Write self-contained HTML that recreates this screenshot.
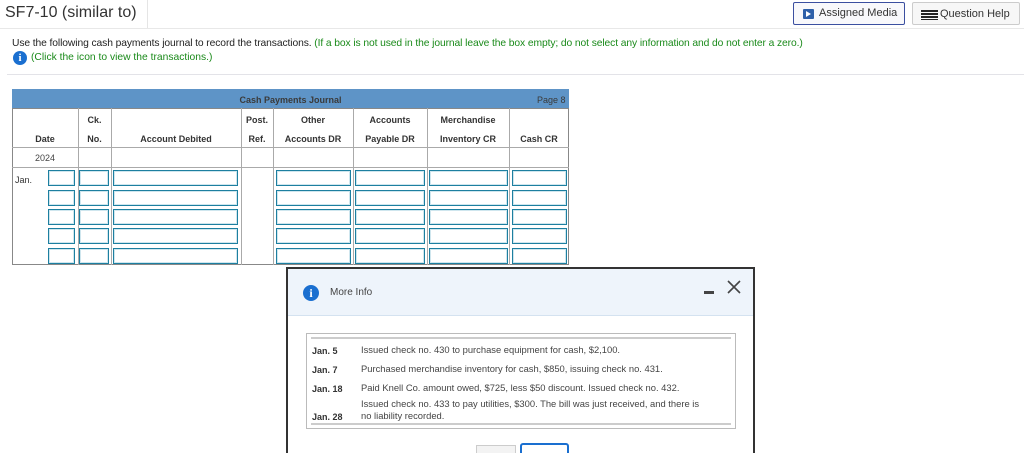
<!DOCTYPE html>
<html style="height:453px;overflow:hidden"><head><meta charset="utf-8"><style>
*{margin:0;padding:0;box-sizing:border-box}
body{width:1024px;height:453px;overflow:hidden;background:#fff;font-family:"Liberation Sans",Arial,sans-serif;color:#333;position:relative}
.a{position:absolute;white-space:nowrap}
.inp{position:absolute;border:1px solid #1d7fa0;box-shadow:inset 0 0 0 1px #cfe6ee;background:#fff}
.vl{position:absolute;width:1px;background:#aaa}
.hl{position:absolute;height:1px;background:#aaa}
.th{position:absolute;font-size:9px;font-weight:bold;color:#333;text-align:center;white-space:nowrap}
.btn{position:absolute;border:1px solid #ccc;border-radius:2px;background:#f7f7f7;font-size:11px;color:#333}
.mt{position:absolute;font-size:9.4px;color:#444;white-space:nowrap}
.mb{position:absolute;font-size:9px;font-weight:bold;color:#333;white-space:nowrap}
</style></head><body>
<div class="a" style="left:5px;top:4px;font-size:16px;color:#333">SF7-10 (similar to)</div>
<div class="vl" style="left:147px;top:0;height:28px;background:#e5e5e5"></div>
<div class="hl" style="left:0;top:28px;width:1024px;background:#e8e8e8"></div>
<div class="btn" style="left:793px;top:2px;width:112px;height:23px;border-color:#3b4fa0;background:#f8f8fb">
 <div style="position:absolute;left:9px;top:6px;width:11px;height:10px;background:#2e5fa8;border-radius:1px"><div style="position:absolute;left:3px;top:2px;border-left:5px solid #fff;border-top:3px solid transparent;border-bottom:3px solid transparent"></div></div>
 <span class="a" style="left:25px;top:4px">Assigned Media</span></div>
<div class="btn" style="left:912px;top:2px;width:108px;height:23px">
 <div style="position:absolute;left:8px;top:7px;width:17px;height:10px;background:repeating-linear-gradient(#222 0 2px,#f7f7f7 2px 3px)"></div>
 <span class="a" style="left:27px;top:5px">Question Help</span></div>
<div class="a" style="left:12px;top:38px;font-size:10.3px;letter-spacing:-0.1px;color:#222">Use the following cash payments journal to record the transactions. <span style="color:#1a8a1a">(If a box is not used in the journal leave the box empty; do not select any information and do not enter a zero.)</span></div>
<div class="a" style="left:13px;top:51px;width:14px;height:14px;border-radius:50%;background:#1a6fd0;color:#fff;font-size:11px;font-weight:bold;text-align:center;line-height:14px;font-family:'Liberation Serif',serif">i</div>
<div class="a" style="left:31px;top:52px;font-size:10.3px;color:#1a8a1a">(Click the icon to view the transactions.)</div>
<div class="hl" style="left:7px;top:74px;width:1017px;background:#e3e3e8"></div>

<div style="position:absolute;left:12px;top:89px;width:557px;height:176px;border:1px solid #888;border-top:none"></div>
<div style="position:absolute;left:12px;top:89px;width:557px;height:19px;background:#5e94c7"></div>
<div class="a" style="left:12px;top:95px;width:557px;text-align:center;font-size:9px;font-weight:bold;color:#3a3a3a">Cash Payments Journal</div>
<div class="a" style="left:537px;top:95px;font-size:9px;color:#3a3a3a">Page 8</div>
<div class="hl" style="left:12px;top:108px;width:557px;background:#888"></div>
<div class="hl" style="left:12px;top:147px;width:557px"></div>
<div class="hl" style="left:12px;top:167px;width:557px"></div>
<div class="vl" style="left:78px;top:108px;height:157px"></div>
<div class="vl" style="left:111px;top:108px;height:157px"></div>
<div class="vl" style="left:241px;top:108px;height:157px"></div>
<div class="vl" style="left:273px;top:108px;height:157px"></div>
<div class="vl" style="left:353px;top:108px;height:157px"></div>
<div class="vl" style="left:427px;top:108px;height:157px"></div>
<div class="vl" style="left:509px;top:108px;height:157px"></div>
<div class="th" style="left:12px;top:134px;width:66px">Date</div>
<div class="th" style="left:78px;top:115px;width:33px">Ck.</div>
<div class="th" style="left:78px;top:134px;width:33px">No.</div>
<div class="th" style="left:111px;top:134px;width:130px">Account Debited</div>
<div class="th" style="left:241px;top:115px;width:32px">Post.</div>
<div class="th" style="left:241px;top:134px;width:32px">Ref.</div>
<div class="th" style="left:273px;top:115px;width:80px">Other</div>
<div class="th" style="left:273px;top:134px;width:80px">Accounts DR</div>
<div class="th" style="left:353px;top:115px;width:74px">Accounts</div>
<div class="th" style="left:353px;top:134px;width:74px">Payable DR</div>
<div class="th" style="left:427px;top:115px;width:82px">Merchandise</div>
<div class="th" style="left:427px;top:134px;width:82px">Inventory CR</div>
<div class="th" style="left:509px;top:134px;width:60px">Cash CR</div>
<div class="a" style="left:12px;top:153px;width:66px;text-align:center;font-size:9px;color:#444">2024</div>
<div class="a" style="left:15px;top:175px;font-size:9px;color:#333">Jan.</div>
<div id="rows"></div>
<script>
var ys=[170,190,209,228,248],xs=[[48,27],[79,30],[113,125],[276,75],[355,70],[429,79],[512,55]],h='';
ys.forEach(function(y){xs.forEach(function(c){h+='<div class="inp" style="left:'+c[0]+'px;top:'+y+'px;width:'+c[1]+'px;height:16px"></div>'})});
document.getElementById('rows').innerHTML=h;
</script>

<div style="position:absolute;left:286px;top:267px;width:469px;height:200px;border:2px solid #333;background:#fff">
 <div style="position:absolute;left:0;top:0;width:465px;height:47px;background:#eef4fb;border-bottom:1px solid #d4e2f0"></div>
 <div class="a" style="left:15px;top:16px;width:16px;height:16px;border-radius:50%;background:#1a6fd0;color:#fff;font-size:12px;font-weight:bold;text-align:center;line-height:16px;font-family:'Liberation Serif',serif">i</div>
 <div class="a" style="left:42px;top:18px;font-size:10px;color:#444">More Info</div>
 <div class="a" style="left:416px;top:22px;width:10px;height:3px;background:#444"></div>
 <svg class="a" style="left:439px;top:11px" width="14" height="14"><path d="M1 1L13 13M13 1L1 13" stroke="#444" stroke-width="1.6"/></svg>
 <div style="position:absolute;left:18px;top:64px;width:430px;height:96px;border:1px solid #bbb">
  <div style="position:absolute;left:4px;top:3px;right:4px;height:2px;background:#ccc"></div>
  <div style="position:absolute;left:4px;bottom:3px;right:4px;height:2px;background:#ccc"></div>
 </div>
 <div class="mb" style="left:24px;top:77px">Jan. 5</div><div class="mt" style="left:73px;top:75px">Issued check no. 430 to purchase equipment for cash, $2,100.</div>
 <div class="mb" style="left:24px;top:96px">Jan. 7</div><div class="mt" style="left:73px;top:94px">Purchased merchandise inventory for cash, $850, issuing check no. 431.</div>
 <div class="mb" style="left:24px;top:115px">Jan. 18</div><div class="mt" style="left:73px;top:113px">Paid Knell Co. amount owed, $725, less $50 discount. Issued check no. 432.</div>
 <div class="mt" style="left:73px;top:129px">Issued check no. 433 to pay utilities, $300. The bill was just received, and there is</div>
 <div class="mt" style="left:73px;top:141px">no liability recorded.</div>
 <div class="mb" style="left:24px;top:143px">Jan. 28</div>
 <div style="position:absolute;left:188px;top:176px;width:40px;height:20px;border:1px solid #ccc;background:#f3f3f3"></div>
 <div style="position:absolute;left:232px;top:174px;width:49px;height:22px;border:2px solid #1a6fd0;border-radius:3px"></div>
</div>
</body></html>
